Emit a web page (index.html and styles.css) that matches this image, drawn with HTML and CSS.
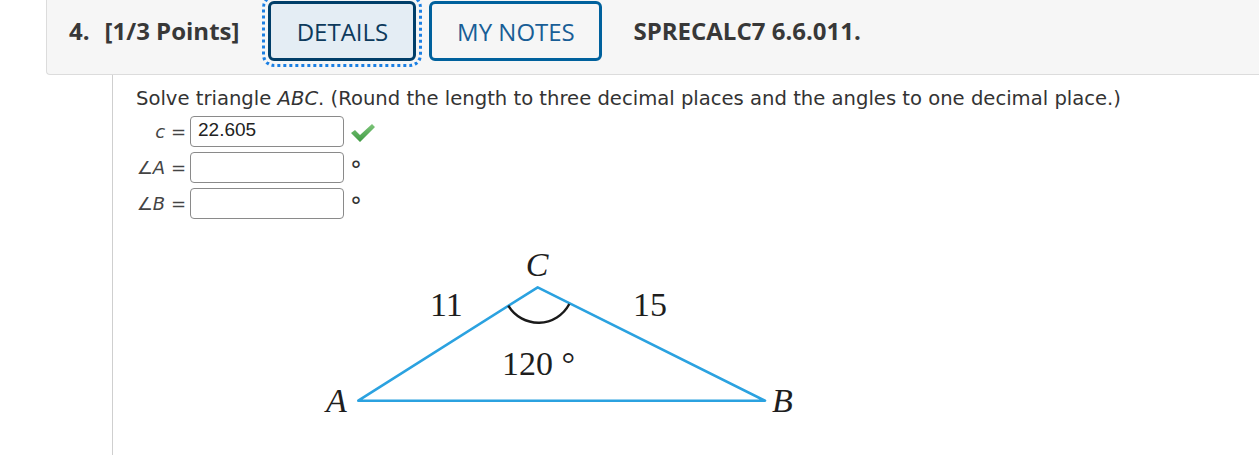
FILE: index.html
```html
<!DOCTYPE html>
<html>
<head>
<meta charset="utf-8">
<link rel="stylesheet" href="styles.css">
</head>
<body>
<div class="page">
  <div class="header">
    <span class="qnum">4.</span>
    <span class="points">[1/3 Points]</span>
    <button class="btn btn-details">DETAILS</button>
    <button class="btn btn-notes">MY NOTES</button>
    <span class="code">SPRECALC7 6.6.011.</span>
  </div>
  <div class="body">
    <div class="content">
      <p class="prompt">Solve triangle <i>ABC</i>. (Round the length to three decimal places and the angles to one decimal place.)</p>
      <div class="answers">
        <div class="row">
          <span class="lbl"><i>c</i> =</span>
          <span class="field">22.605</span>
          <svg class="check" width="26" height="20" viewBox="0 0 26 20"><defs><linearGradient id="g" x1="0" y1="0" x2="0" y2="1"><stop offset="0" stop-color="#7dc57a"/><stop offset="1" stop-color="#3f9a42"/></linearGradient></defs><path d="M1,10 L5,7 L10,12 L22,1 L25,4 L10,19 Z" fill="url(#g)"/></svg>
        </div>
        <div class="row">
          <span class="lbl">∠<i>A</i> =</span>
          <span class="field"></span>
          <span class="deg">°</span>
        </div>
        <div class="row">
          <span class="lbl">∠<i>B</i> =</span>
          <span class="field"></span>
          <span class="deg">°</span>
        </div>
      </div>
      <svg class="figure" width="520" height="200" viewBox="0 0 520 200">
        <path d="M58.3,161.7 L237.7,48.3 L465,161.7 Z" fill="none" stroke="#2ba2e0" stroke-width="2.6" stroke-linejoin="round"/>
        <path d="M208.3,66.7 A35,35 0 0 0 269.3,65" fill="none" stroke="#1a1a1a" stroke-width="2.4"/>
        <text class="v" x="237" y="37" text-anchor="middle">C</text>
        <text class="n" x="130" y="77">11</text>
        <text class="n" x="333" y="77">15</text>
        <text class="n" x="202" y="136">120 °</text>
        <text class="v" x="26" y="173">A</text>
        <text class="v" x="472" y="173">B</text>
      </svg>
    </div>
  </div>
</div>
</body>
</html>
```

FILE: styles.css
```css
html, body {
  margin: 0;
  padding: 0;
  background: #ffffff;
}
.page {
  width: 1259px;
  height: 455px;
  overflow: hidden;
}
.header {
  margin-left: 46px;
  height: 74px;
  background: #f6f6f6;
  border-left: 1px solid #dcdcdc;
  border-bottom: 1px solid #dcdcdc;
  border-bottom-left-radius: 4px;
  display: flex;
  align-items: flex-start;
  font-family: "Open Sans", sans-serif;
  color: #383838;
  box-sizing: content-box;
}
.qnum, .points, .code {
  font-weight: 700;
  font-size: 24px;
  line-height: 60px;
  margin-top: 1px;
}
.qnum {
  margin-left: 22px;
}
.points {
  margin-left: 15px;
}
.code {
  margin-left: 31px;
}
.btn {
  font-family: "Open Sans", sans-serif;
  font-size: 24px;
  height: 60px;
  margin-top: 1px;
  border-radius: 6px;
  border: 3px solid;
  padding: 0;
  box-sizing: border-box;
}
.btn-details {
  margin-left: 29px;
  width: 148px;
  background: #e4edf4;
  border-color: #003e69;
  color: #0d3a5c;
  outline: 3px dotted #1b7fe3;
  outline-offset: 3px;
}
.btn-notes {
  margin-left: 13px;
  width: 173px;
  background: transparent;
  border-color: #00619d;
  color: #195e96;
}
.body {
  margin-left: 112px;
  border-left: 1px solid #cfcfcf;
  height: 380px;
}
.content {
  padding-left: 23px;
  font-family: "DejaVu Sans", Verdana, sans-serif;
  color: #333;
}
.prompt {
  margin: 0;
  padding-top: 11px;
  font-size: 19.6px;
  line-height: 26px;
}
.answers {
  display: flex;
  flex-direction: column;
  gap: 5px;
  margin-top: 4px;
}
.row {
  display: flex;
  align-items: center;
  height: 31px;
}
.lbl {
  width: 50px;
  text-align: right;
  font-size: 18px;
  color: #444;
  padding-right: 4px;
}
.field {
  width: 154px;
  height: 31px;
  box-sizing: border-box;
  border: 1px solid #8a8a8a;
  border-radius: 4px;
  background: #fff;
  font-family: "Liberation Sans", Arial, sans-serif;
  font-size: 19px;
  color: #222;
  padding-left: 7px;
  line-height: 26px;
}
.check {
  margin-left: 6px;
  margin-top: 2px;
}
.deg {
  margin-left: 6px;
  font-size: 24px;
  line-height: 20px;
  margin-top: 6px;
  color: #333;
}
.figure {
  display: block;
  margin-top: 20px;
  margin-left: 164px;
}
.figure text {
  font-family: "Liberation Serif", "DejaVu Serif", serif;
  font-size: 34px;
  fill: #1e1e1e;
}
.figure text.v {
  font-style: italic;
}
```
